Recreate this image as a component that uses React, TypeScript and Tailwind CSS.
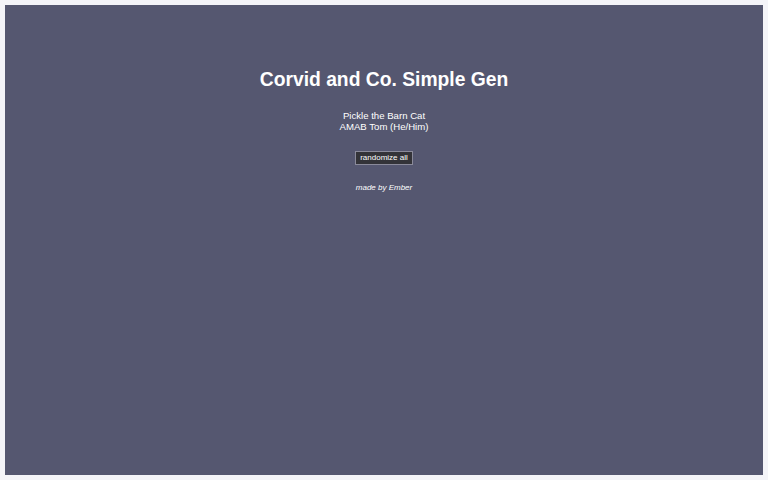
export default function App() {
  return (
    <div className="w-[768px] h-[480px] bg-[#f4f4f8] p-[5px] pb-[5px]" style={{ fontFamily: '"Liberation Sans", Arial, sans-serif' }}>
      <div className="w-[758px] h-[470px] bg-[#555770] flex flex-col items-center text-white">
        <h1 className="mt-[60px] text-[19.3px] leading-[30px] font-bold">Corvid and Co. Simple Gen</h1>
        <div className="mt-[15px] text-[9.6px] leading-[11px] text-center">
          <div>Pickle the Barn Cat</div>
          <div>AMAB Tom (He/Him)</div>
        </div>
        <button className="mt-[19px] h-[14px] px-[4px] text-[8px] leading-[12px] bg-[#333338] border border-[#8a8a9a] text-white">randomize all</button>
        <div className="mt-[18px] text-[8px] leading-[10px] italic">made by Ember</div>
      </div>
    </div>
  );
}
